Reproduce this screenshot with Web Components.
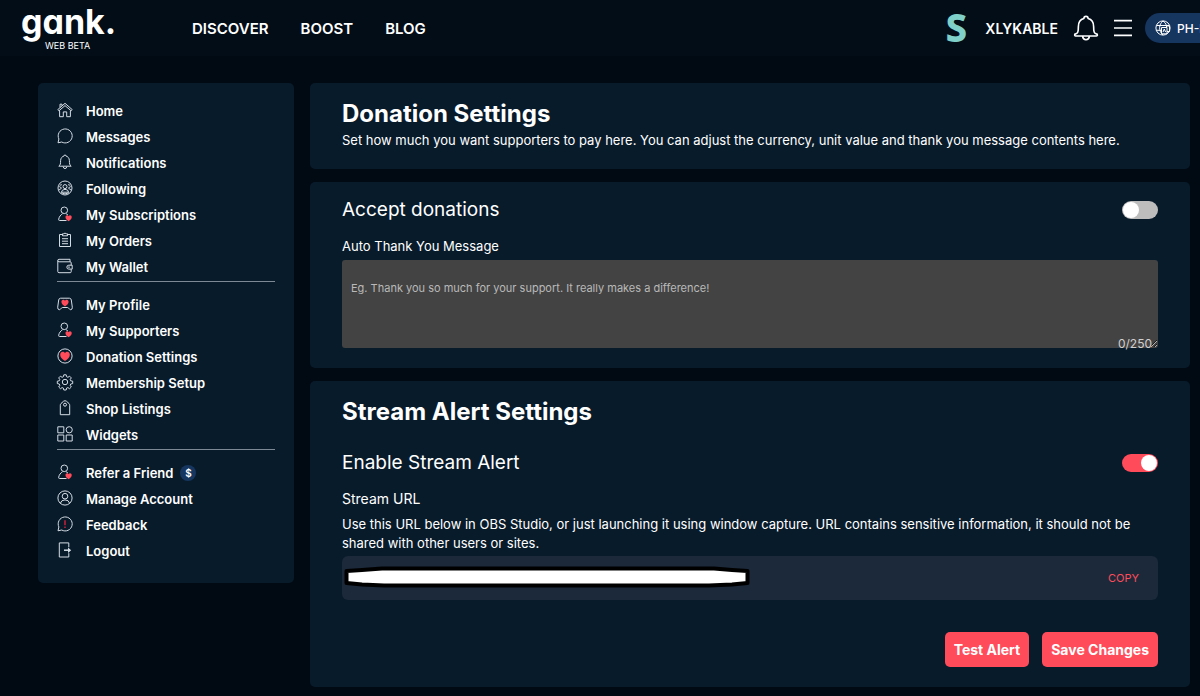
<!DOCTYPE html>
<html lang="en">
<head>
<meta charset="utf-8">
<meta name="viewport" content="width=device-width, initial-scale=1">
<title>Donation Settings - gank</title>
<style>
  html { background: #010a13; }
  body {
    margin: 0;
    min-height: 100vh;
    overflow-x: hidden;
    color: #fff;
    font-family: Inter, "Liberation Sans", sans-serif;
    font-size: 13px;
    --panel: #081b2b;
    --accent: #ff4b5a;
    --line: #7d8a96;
  }
</style>
</head>
<body>
<gank-app></gank-app>

<script>
const define = (name, html, setup) => {
  const template = document.createElement('template');
  template.innerHTML = html;
  customElements.define(name, class extends HTMLElement {
    constructor() {
      super();
      this.attachShadow({ mode: 'open' }).append(template.content.cloneNode(true));
    }
    connectedCallback() {
      if (setup && !this.ready) { this.ready = true; setup(this, this.shadowRoot); }
    }
  });
};

const heart = (x, y, s) =>
  `<path transform="translate(${x} ${y}) scale(${s})" fill="#ff4b5a" stroke="none" d="M0 4.2C-2.6 2.4-4 .8-4-1.1-4-2.6-3-3.5-1.9-3.5-1-3.5-.3-3 0-2.3.3-3 1-3.5 1.9-3.5 3-3.5 4-2.6 4-1.1 4 .8 2.6 2.4 0 4.2Z"/>`;
const person = `<circle cx="7.3" cy="4.3" r="3.3"/><path d="M9.5 14.5H2.6Q1.4 14.5 1.7 13.2C2.2 10.6 3.6 9 5.5 7.8M9.1 7.8Q10.2 8.2 11 9.2"/>${heart(11.6, 12, .78)}`;
const icons = {
  home: '<path d="M.8 7.6 8 1.3l7.2 6.3-1.1 1.2L8 3.6 1.9 8.8ZM2.6 8.6v6.1h3.7V9.9h3.4v4.8h3.7V8.6M3 5.5V2.2h2v1.6"/>',
  chat: '<path d="M1 14.8 1.9 11A7 7 0 1 1 4.7 14Z"/>',
  bell: '<path d="M1.8 12.2C3.5 11 3.6 9.6 3.6 6.6 3.6 4 5.4 2.3 7.1 2 7 .5 9 .5 8.9 2c1.7.3 3.5 2 3.5 4.6 0 3 .1 4.4 1.8 5.6ZM6.2 12.6Q6.4 14.6 8 14.6T9.8 12.6"/>',
  bigbell: '<path d="M1.6 12.9Q1 12.9 1 12.3T1.6 11.6C3 11.2 3.3 10.3 3.3 7.2 3.3 4.6 4.6 2.7 6.7 2.2 6.7.4 9.3.4 9.3 2.2c2.1.5 3.4 2.4 3.4 5 0 3.1.3 4 1.7 4.4Q15 11.7 15 12.3T14.4 12.9ZM5.9 13.1Q6.2 15.2 8 15.2T10.1 13.1"/>',
  following: '<circle cx="8" cy="8" r="7"/><circle cx="8" cy="6.6" r="2"/><path d="M4.4 12.2Q4.7 9.5 8 9.4t3.6 2.8ZM4.8 7.9A1.6 1.6 0 1 1 5 4.9M11.2 7.9A1.6 1.6 0 1 0 11 4.9M1.8 10.6Q2.3 8.7 4.4 8.7M14.2 10.6Q13.7 8.7 11.6 8.7M4 12.8Q8 15 12 12.8"/>',
  person,
  orders: '<path d="M5.5 2.5h-3v12h11v-12h-3M5.5 3.8V1.8h1.4Q8 .2 9.1 1.8h1.4v2ZM5 6.7h6M5 9.2h6M5 11.7h6"/>',
  wallet: '<path d="M13 3.8V1.3H2Q.8 1.3.8 2.5T2 3.8h11.2q1 0 1 1v2.4M.8 2.5v11q0 1.2 1.2 1.2h11.2q1 0 1-1v-2.4M15.2 7.2h-3.4a1.9 1.9 0 0 0 0 3.9h3.4Z"/><circle cx="12" cy="9.1" r=".4"/>',
  profile: `<path d="M3.6 2.2h8.8Q14 2.2 14.3 4l1 7.2q.2 2.5-1.7 2.5c-1.4 0-1.8-2.2-3.1-2.2h-5c-1.3 0-1.7 2.2-3.1 2.2Q.5 13.7.7 11.2L1.7 4Q2 2.2 3.6 2.2Z"/>${heart(8, 6.8, .9)}`,
  donation: `<circle cx="8" cy="8" r="7.1"/>${heart(8, 8, 1.2)}`,
  gear: '<circle cx="8" cy="8" r="2.7"/><path d="M6.8.8h2.4l.4 1.9 1.3.6 1.7-1.1 1.7 1.7-1.1 1.7.5 1.2 2 .4v2.4l-2 .4-.5 1.3 1.1 1.7-1.7 1.7-1.7-1.1-1.3.5-.4 1.9H6.8l-.4-1.9-1.3-.5-1.7 1.1-1.7-1.7 1.1-1.7-.5-1.3-2-.4V7.2l2-.4.5-1.2-1.1-1.7 1.7-1.7 1.7 1.1 1.3-.6Z"/>',
  tag: '<path d="M3.3 14.7V5.2Q3.3 4.2 4 3.5L6.6 1.2Q8 .2 9.4 1.2L12 3.5q.7.7.7 1.7v9.5Z"/><circle cx="8" cy="4.7" r="1.5"/>',
  widgets: '<path d="M.8.8h6v6h-6ZM.8 9h6v6h-6ZM9.2 9h6v6h-6Z"/><circle cx="12.2" cy="3.8" r="3.1"/>',
  account: '<circle cx="8" cy="8" r="7.1"/><circle cx="8" cy="6.2" r="2.8"/><path d="M3.4 13.2Q4.2 9.9 8 9.9t4.6 3.3"/>',
  feedback: '<path d="M1 14.8 1.9 11A7 7 0 1 1 4.7 14Z"/><path stroke="#e8203c" stroke-width="1.3" d="M8 4.2v5M8 10.6v1.3"/>',
  logout: '<path d="M11.8 5.2V.9H2.3V15h9.5v-3.8"/><path stroke-width="1.5" d="M7 8.2h6"/><path fill="currentColor" stroke="none" d="M11 5.5 14.2 8.2 11 10.9Z"/>',
  globe: '<circle cx="8" cy="8" r="7.1"/><path d="M8 1C3.5 4.5 3.5 11 8 15M8 1c3 2 3.6 4.5 3.5 6M1.4 5.5h13M1.2 10.3h5M6.5 7.5H12v6.3H6.5ZM8 12l1.3-3 1.3 3M12 6h2.5v5.5H12"/>',
  menu: '<path d="M0 1.5h16M0 8h16M0 14.5h16"/>'
};

define('ui-icon', `
  <style>
    :host { display: block; flex: none; width: 16px; height: 16px; }
    svg { display: block; width: 100%; height: 100%; overflow: visible; }
  </style>
  <svg viewBox="0 0 16 16" fill="none" stroke="currentColor" stroke-linejoin="round" aria-hidden="true"></svg>
`, (host, root) => {
  const svg = root.querySelector('svg');
  svg.innerHTML = icons[host.getAttribute('name')];
  svg.setAttribute('stroke-width', host.getAttribute('weight') || '1');
});

define('gank-header', `
  <style>
    :host { display: flex; align-items: center; height: 56px; padding-left: 21px; background: #020d18; overflow: hidden; }
    a { color: inherit; text-decoration: none; }
    .brand { display: flex; flex-direction: column; width: 94px; line-height: 1; }
    .name { font-size: 34px; line-height: 36px; font-weight: 700; font-feature-settings: "cv11"; }
    .beta { font-size: 9px; line-height: 12px; padding-left: 24px; }
    nav { display: flex; gap: 32px; margin-left: 77px; font-size: 15px; font-weight: 600; }
    .tools { display: flex; align-items: center; margin-left: auto; }
    .avatar { font: 600 36px/40px "Open Sans", sans-serif; color: #7fd0c8; -webkit-text-stroke: 2px #7fd0c8; stroke-linejoin: round; margin-right: 19px; }
    .user { font-size: 14px; font-weight: 600; margin-right: 15px; }
    button { border: 0; padding: 0; background: none; color: inherit; font: inherit; cursor: pointer; }
    .bell { margin-right: 15px; }
    .bell ui-icon { width: 26px; height: 28px; }
    .menu { margin-right: 13px; }
    .menu ui-icon { width: 18px; height: 18px; }
    .region { display: flex; align-items: center; gap: 6px; height: 30px; width: 100px; padding-left: 10px; margin-right: -45px; border-radius: 15px; background: #163660; font-size: 12px; font-weight: 500; }
  </style>
  <a class="brand" href="#"><span class="name">gank.</span><span class="beta">WEB BETA</span></a>
  <nav aria-label="Main"><a href="#">DISCOVER</a><a href="#">BOOST</a><a href="#">BLOG</a></nav>
  <div class="tools">
    <span class="avatar">S</span>
    <a class="user" href="#">XLYKABLE</a>
    <button class="bell" aria-label="Notifications"><ui-icon name="bigbell"></ui-icon></button>
    <button class="menu" aria-label="Menu"><ui-icon name="menu" weight="1.5"></ui-icon></button>
    <button class="region"><ui-icon name="globe"></ui-icon>PH-EN</button>
  </div>
`);

define('nav-item', `
  <style>
    :host { display: block; }
    a { display: flex; align-items: center; height: 26px; color: inherit; text-decoration: none; font-weight: 600; }
    ui-icon { margin: 0 13px 3px 0; color: #d5dde4; }
  </style>
  <a href="#"><slot></slot></a>
`, (host, root) => {
  const icon = document.createElement('ui-icon');
  icon.setAttribute('name', host.getAttribute('icon'));
  root.querySelector('a').prepend(icon);
});

define('side-nav', `
  <style>
    :host { display: block; padding: 15px 19px 19px; border-radius: 5px; background: var(--panel); }
    hr { height: 1px; margin: 1px 0 10px; border: 0; background: var(--line); }
    .badge { display: inline-block; width: 16px; margin-left: 7px; border-radius: 50%; background: #163660; font-size: 10px; line-height: 16px; text-align: center; }
  </style>
  <nav aria-label="Account">
    <nav-item icon="home">Home</nav-item>
    <nav-item icon="chat">Messages</nav-item>
    <nav-item icon="bell">Notifications</nav-item>
    <nav-item icon="following">Following</nav-item>
    <nav-item icon="person">My Subscriptions</nav-item>
    <nav-item icon="orders">My Orders</nav-item>
    <nav-item icon="wallet">My Wallet</nav-item>
    <hr>
    <nav-item icon="profile">My Profile</nav-item>
    <nav-item icon="person">My Supporters</nav-item>
    <nav-item icon="donation">Donation Settings</nav-item>
    <nav-item icon="gear">Membership Setup</nav-item>
    <nav-item icon="tag">Shop Listings</nav-item>
    <nav-item icon="widgets">Widgets</nav-item>
    <hr>
    <nav-item icon="person">Refer a Friend<span class="badge">$</span></nav-item>
    <nav-item icon="account">Manage Account</nav-item>
    <nav-item icon="feedback">Feedback</nav-item>
    <nav-item icon="logout">Logout</nav-item>
  </nav>
`);

define('settings-panel', `
  <style>
    :host { display: block; padding: 16px 32px 20px; border-radius: 5px; background: var(--panel); }
  </style>
  <slot></slot>
`);

define('toggle-row', `
  <style>
    :host { display: block; }
    label { display: flex; align-items: center; justify-content: space-between; font-size: 19px; line-height: 24px; }
    input { appearance: none; position: relative; width: 36px; height: 18px; margin: 0; border-radius: 9px; background: #bdbdbd; cursor: pointer; }
    input::before { content: ""; position: absolute; top: 1px; left: 1px; width: 16px; height: 16px; border-radius: 50%; background: #fff; }
    input:checked { background: var(--accent); }
    input:checked::before { left: 19px; }
  </style>
  <label><slot></slot><input type="checkbox" role="switch"></label>
`, (host, root) => {
  root.querySelector('input').checked = host.hasAttribute('checked');
});

define('message-field', `
  <style>
    :host { display: block; }
    label { display: block; line-height: 20px; margin-bottom: 4px; }
    .box { position: relative; }
    textarea { display: block; box-sizing: border-box; width: 100%; height: 88px; padding: 19px 9px; border: 0; border-radius: 3px; outline: 0; background: #434343; color: #fff; font: 11px/18px Inter, sans-serif; }
    textarea::placeholder { color: #b9b9b9; }
    output { position: absolute; right: 6px; bottom: -4px; color: #d0d0d0; font-size: 12px; line-height: 16px; pointer-events: none; }
  </style>
  <label for="message">Auto Thank You Message</label>
  <div class="box">
    <textarea id="message" maxlength="250" placeholder="Eg. Thank you so much for your support. It really makes a difference!"></textarea>
    <output for="message">0/250</output>
  </div>
`, (host, root) => {
  const area = root.querySelector('textarea');
  area.addEventListener('input', () => { root.querySelector('output').textContent = area.value.length + '/250'; });
});

define('url-field', `
  <style>
    :host { display: block; }
    label { display: block; font-size: 14px; line-height: 20px; }
    p { margin: 6px 0 3px; line-height: 19px; }
    .box { position: relative; display: flex; height: 44px; border-radius: 6px; background: #1b293a; }
    input { flex: 1; min-width: 0; padding: 0 12px; border: 0; outline: 0; background: none; color: #fff; font: inherit; }
    svg { position: absolute; left: 2px; top: 10px; width: 406px; height: 22px; }
    button { padding: 0 19px; border: 0; background: none; color: var(--accent); font: 11px Inter, sans-serif; cursor: pointer; }
  </style>
  <label for="url">Stream URL</label>
  <p id="hint">Use this URL below in OBS Studio, or just launching it using window capture. URL contains sensitive information, it should not be shared with other users or sites.</p>
  <div class="box">
    <input id="url" readonly aria-describedby="hint">
    <svg viewBox="0 0 406 22" aria-hidden="true"><path fill="#fff" stroke="#000" stroke-width="4" stroke-linejoin="round" d="M2.5 5 18 4 38 2.5H370L388 4 403.5 5V17L388 18.5 365 19.5H40L18 18.5 2.5 17Z"/></svg>
    <button>COPY</button>
  </div>
`);

define('action-button', `
  <style>
    :host { display: block; }
    button { height: 35px; padding: 0 9px; border: 0; border-radius: 5px; background: var(--accent); color: #fff; font: 700 14px Inter, sans-serif; cursor: pointer; }
  </style>
  <button><slot></slot></button>
`);

define('gank-app', `
  <style>
    :host { display: block; }
    .page { display: grid; grid-template-columns: 256px minmax(0, 1fr); align-items: start; gap: 16px; padding: 27px 10px 10px 38px; }
    main { display: grid; gap: 13px; }
    h1, h2 { margin: 0; font-size: 24px; line-height: 30px; font-weight: 700; }
    p { margin: 2px 0 0; line-height: 18px; }
    message-field { margin-top: 14px; }
    .alerts toggle-row { margin: 24px 0 14px; }
    .actions { display: flex; justify-content: flex-end; gap: 13px; margin-top: 32px; }
  </style>
  <gank-header></gank-header>
  <div class="page">
    <side-nav></side-nav>
    <main>
      <settings-panel>
        <h1>Donation Settings</h1>
        <p>Set how much you want supporters to pay here. You can adjust the currency, unit value and thank you message contents here.</p>
      </settings-panel>
      <settings-panel>
        <toggle-row>Accept donations</toggle-row>
        <message-field></message-field>
      </settings-panel>
      <settings-panel class="alerts">
        <h2>Stream Alert Settings</h2>
        <toggle-row checked>Enable Stream Alert</toggle-row>
        <url-field></url-field>
        <div class="actions">
          <action-button>Test Alert</action-button>
          <action-button>Save Changes</action-button>
        </div>
      </settings-panel>
    </main>
  </div>
`);
</script>
</body>
</html>
